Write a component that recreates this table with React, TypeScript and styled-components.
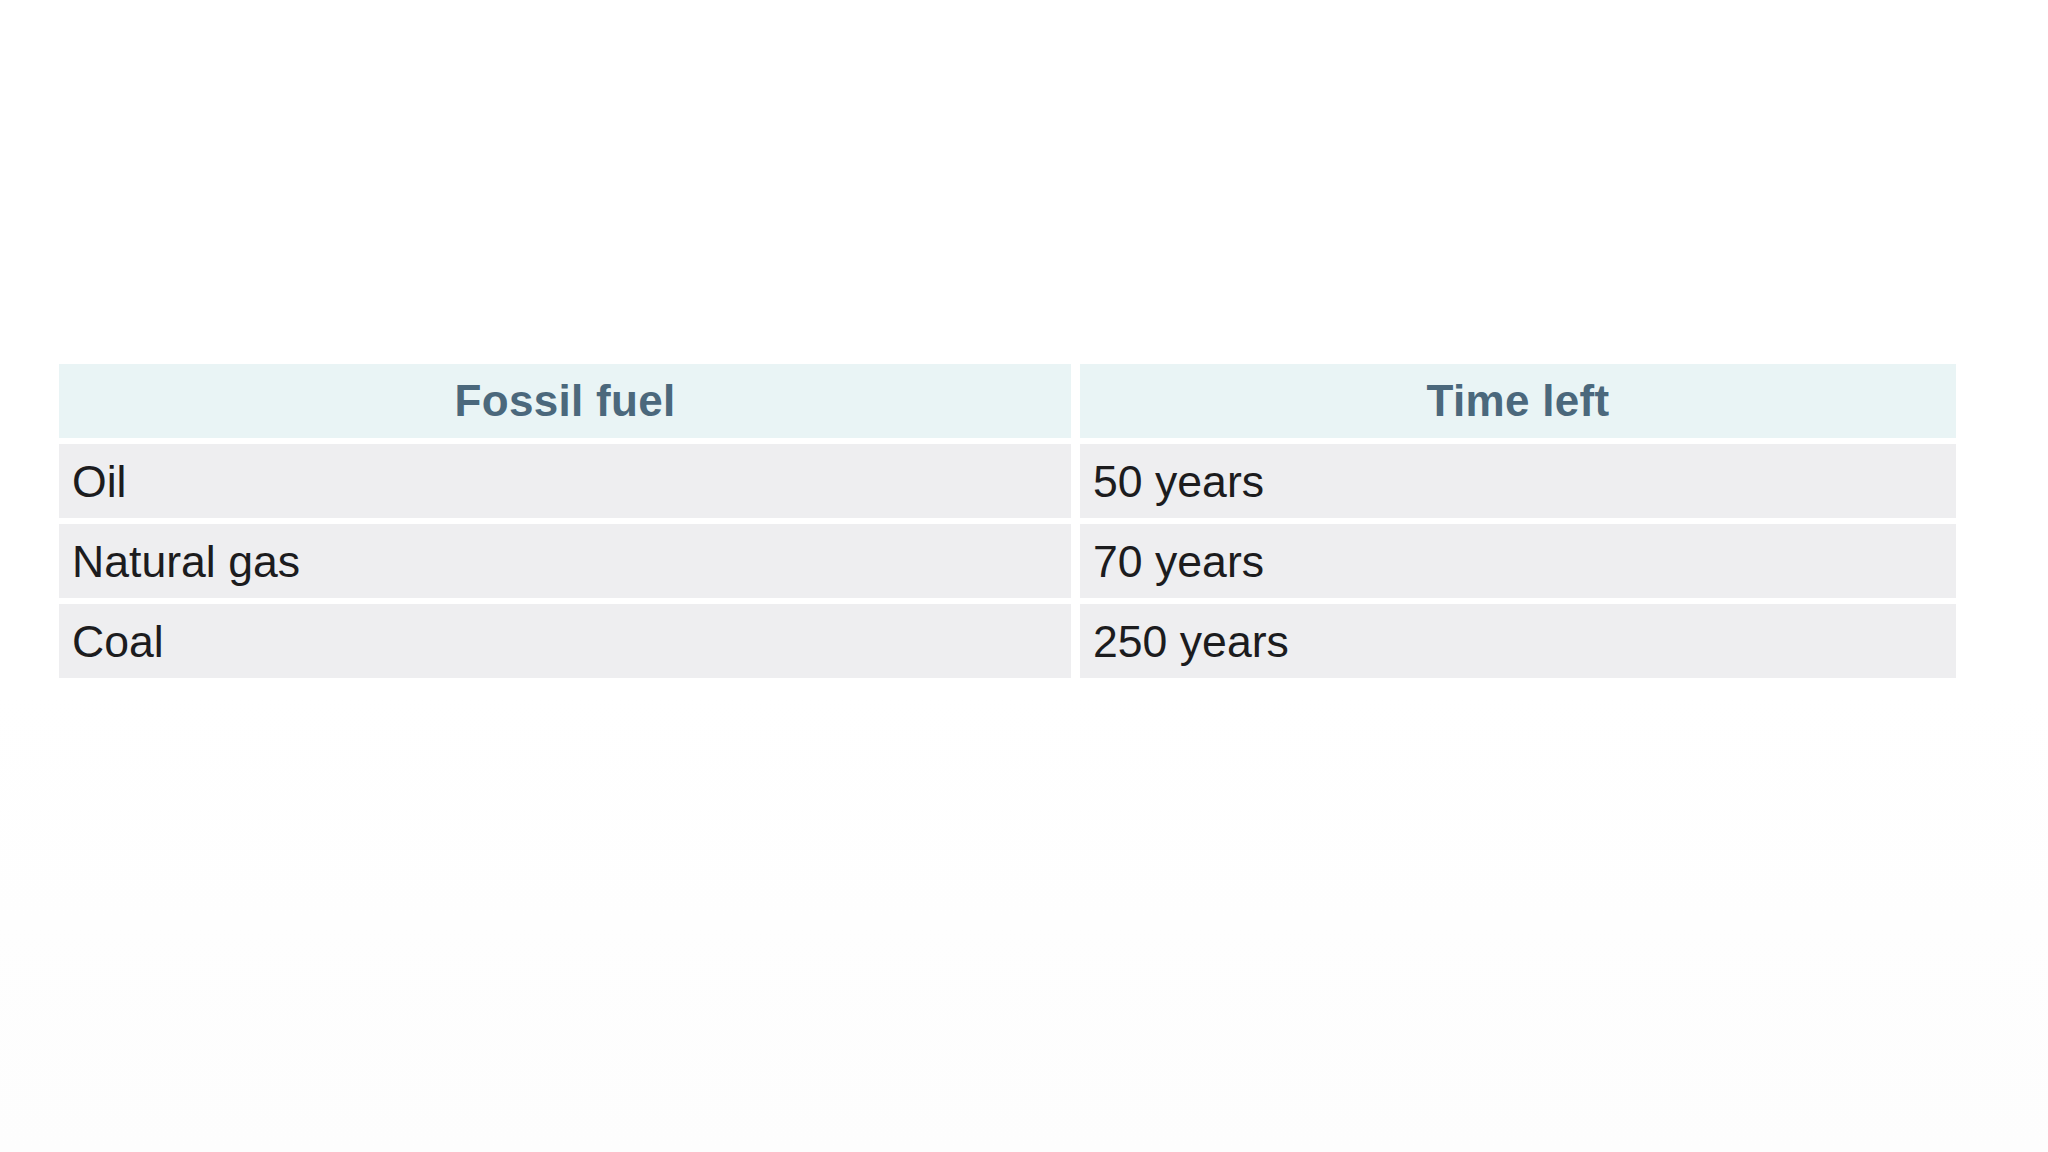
import React from 'react'
import styled, { createGlobalStyle } from 'styled-components'

type Fuel = {
	name: string
	timeLeft: string
}

const fuels: Fuel[] = [
	{ name: 'Oil', timeLeft: '50 years' },
	{ name: 'Natural gas', timeLeft: '70 years' },
	{ name: 'Coal', timeLeft: '250 years' },
]

const GlobalStyle = createGlobalStyle`
	html, body {
		margin: 0;
		padding: 0;
		background: #ffffff;
	}
	body {
		font-family: "Liberation Sans", Arial, sans-serif;
	}
`

export default function App() {
	return (
		<>
			<GlobalStyle />
			<Page>
				<FuelTable role="table">
					<HeaderCell role="columnheader">Fossil fuel</HeaderCell>
					<HeaderCell role="columnheader">Time left</HeaderCell>
					{fuels.map(fuel => (
						<React.Fragment key={fuel.name}>
							<BodyCell role="cell">{fuel.name}</BodyCell>
							<BodyCell role="cell">{fuel.timeLeft}</BodyCell>
						</React.Fragment>
					))}
				</FuelTable>
			</Page>
		</>
	)
}

const Page = styled.div`
	width: 2048px;
	height: 1152px;
	box-sizing: border-box;
	padding: 364px 0 0 59px;
	background: linear-gradient(180deg, #ffffff 0%, #ffffff 60%, #fdfdfd 100%);
`

const FuelTable = styled.div`
	display: grid;
	grid-template-columns: 1012px 876px;
	grid-auto-rows: 74px;
	column-gap: 9px;
	row-gap: 6px;
`

const HeaderCell = styled.div`
	display: flex;
	align-items: center;
	justify-content: center;
	background: #e9f4f5;
	color: #4b687c;
	font-size: 44px;
	font-weight: 700;
	letter-spacing: 0.3px;
	padding-bottom: 1px;
`

const BodyCell = styled.div`
	display: flex;
	align-items: center;
	padding: 2px 0 0 13px;
	background: #eeeef0;
	color: #1c1c1e;
	font-size: 44.6px;
`
